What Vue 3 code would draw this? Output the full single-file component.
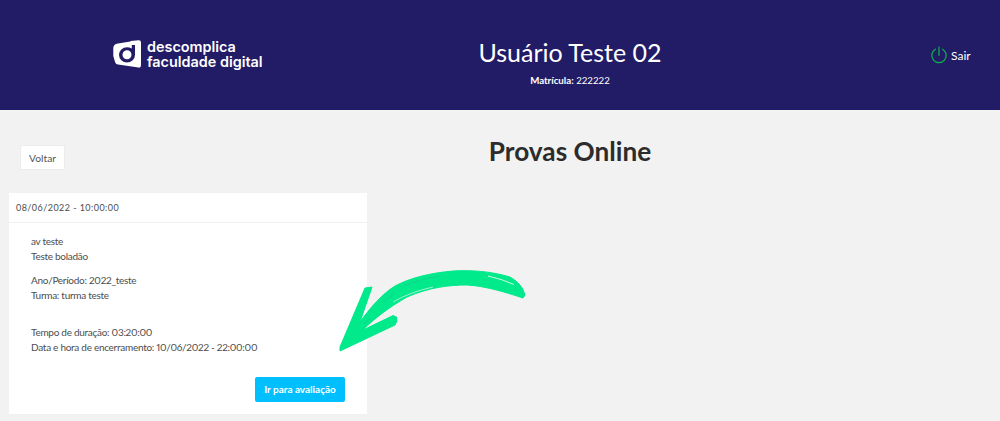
<template>
  <div class="page">
    <header class="topbar">
      <div class="brand">
        <svg class="brand-mark" viewBox="0 0 28 28" width="28" height="28">
          <path fill="#fff" fill-rule="evenodd" d="M5 3.4 17.5 1.6V1L25.5 0.2Q28 0 28 2.4V25.6Q28 28 25.5 27.6L5 24.6Q3 24.2 2.2 22.4L0.3 16V8Q0.3 4.2 5 3.4ZM22 5V14.8A8 7.6 0 1 1 14 7.2Q16.6 7.2 18.8 8.4V5ZM18.5 14.8A4.5 4.5 0 1 0 9.5 14.8A4.5 4.5 0 1 0 18.5 14.8Z" />
        </svg>
        <div class="brand-name">
          <span>descomplica</span>
          <span>faculdade digital</span>
        </div>
      </div>
      <div class="student">
        <h1>Usuário Teste 02</h1>
        <p><strong>Matrícula:</strong> 222222</p>
      </div>
      <a class="logout">
        <svg viewBox="0 0 20 20" width="18" height="20" fill="none" stroke="#0fae4f" stroke-width="1.4" stroke-linecap="round">
          <path d="M6 3.6A8 8 0 1 0 14 3.6" />
          <path d="M10 1.2V10.4" />
        </svg>
        <span>Sair</span>
      </a>
    </header>

    <main class="content">
      <div class="title-row">
        <button class="back" type="button">Voltar</button>
        <h2>Provas Online</h2>
      </div>

      <section class="card">
        <div class="card-head">08/06/2022 - 10:00:00</div>
        <div class="card-body">
          <p>av teste<br />Teste boladão</p>
          <p>Ano/Período: 2022_teste<br />Turma: turma teste</p>
          <p class="dates">Tempo de duração: 03:20:00<br />Data e hora de encerramento: 10/06/2022 - 22:00:00</p>
          <div class="actions">
            <button class="go" type="button">Ir para avaliação</button>
          </div>
        </div>
      </section>
    </main>

    <svg class="arrow" viewBox="0 0 220 110" width="220" height="110">
      <path fill="#00e98a" stroke="#00e98a" stroke-width="1" stroke-linejoin="round" d="M205 45C203 38 200 33 190 27C170 21 150 20 133 21C110 23 90 28 75 36C62 44 50 58 40 72L52 37L45 38L20 97L20 101L75 75Q78 71 76.5 67L73 65.6L43 80C55 68 68 58 87 47C110 37 130 35 147 35C165 36 185 42 203 48Z" />
      <path fill="none" stroke="#e4f8ef" stroke-width="0.9" d="M168 26Q182 29 194 34.5" />
      <path fill="none" stroke="#c8f5e2" stroke-width="0.8" d="M73 52Q90 42 113 37" />
      <path fill="none" stroke="#19c99a" stroke-width="0.7" d="M120 26Q100 29 84 36M62 52Q70 47 74 44M44 74Q48 70 50 68" />
    </svg>
  </div>
</template>

<script setup>
</script>

<style>
html, body {
  margin: 0;
  background: #f2f2f2;
}
</style>

<style scoped>
.page {
  position: relative;
  width: 1000px;
  height: 421px;
  overflow: hidden;
  background: #f2f2f2;
  font-family: Lato, sans-serif;
  color: #4d4d4d;
}

.topbar {
  height: 110px;
  background: #221c66;
  color: #fff;
  display: flex;
  align-items: flex-start;
}

.brand {
  width: 352px;
  padding: 39px 0 0 113px;
  box-sizing: border-box;
  display: flex;
  align-items: center;
  gap: 6px;
}

.brand-name {
  display: flex;
  flex-direction: column;
  font-family: Inter, sans-serif;
  font-weight: 600;
  font-size: 14.4px;
  line-height: 15px;
  white-space: nowrap;
}

.student {
  width: 436px;
  text-align: center;
  padding-top: 35px;
}

.student h1 {
  margin: 0;
  font-weight: 400;
  font-size: 25px;
  line-height: 34px;
}

.student p {
  margin: 4px 0 0;
  font-size: 9.7px;
  line-height: 14px;
}

.logout {
  display: flex;
  align-items: center;
  gap: 3px;
  margin: 45px 0 0 142px;
  font-size: 12px;
}

.content {
  padding: 0 9px;
}

.title-row {
  position: relative;
  height: 83px;
  box-sizing: border-box;
  padding: 24px 0 0 343px;
}

.title-row h2 {
  width: 436px;
  margin: 0;
  text-align: center;
  font-size: 26.2px;
  line-height: 34px;
  font-weight: 700;
  color: #2c2c2c;
}

.back {
  position: absolute;
  left: 11px;
  top: 35px;
  width: 45px;
  height: 25px;
  padding: 0;
  background: #fff;
  border: 1px solid #ececec;
  border-radius: 2px;
  font: inherit;
  font-size: 10.3px;
  color: #555;
}

.card {
  width: 358px;
  height: 221px;
  background: #fff;
}

.card-head {
  height: 29px;
  line-height: 29px;
  padding-left: 7px;
  font-size: 9px;
  letter-spacing: 0.45px;
  border-bottom: 1px solid #f0f0f0;
}

.card-body {
  padding: 11px 22px 0;
  font-size: 10px;
  letter-spacing: -0.28px;
  font-variant-numeric: proportional-nums;
  line-height: 15px;
}

.card-body p {
  margin: 0 0 9px;
}

.card-body .dates {
  margin-top: 22px;
}

.actions {
  display: flex;
  justify-content: flex-end;
  padding-top: 13px;
}

.go {
  width: 90px;
  height: 25px;
  padding: 0;
  border: none;
  border-radius: 2px;
  background: #00bfff;
  color: #fff;
  font: inherit;
  font-size: 10px;
  letter-spacing: 0;
  font-weight: 700;
}

.arrow {
  position: absolute;
  left: 320px;
  top: 250px;
}
</style>
